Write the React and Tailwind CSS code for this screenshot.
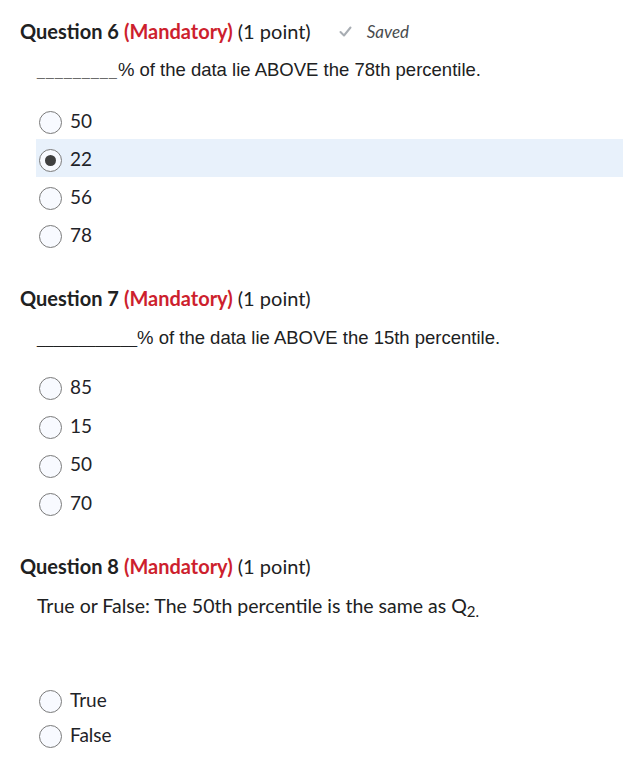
import { useState } from 'react'

const LATO = { fontFamily: 'Lato, "Noto Sans", sans-serif' }
const ARIAL = { fontFamily: '"Liberation Sans", Arial, sans-serif' }

function Radio({ checked }) {
  return (
    <span className="mt-[5px] flex h-[23px] w-[23px] shrink-0 items-center justify-center rounded-full border border-[#7a7a7a] bg-[#f8faff]">
      {checked && <span className="h-[11px] w-[11px] rounded-full bg-[#404040]" />}
    </span>
  )
}

function Options({ items, selected, onPick, rowH = 'h-[38px]' }) {
  return (
    <div className="flex flex-col">
      {items.map((label) => {
        const on = selected === label
        return (
          <button
            key={label}
            type="button"
            onClick={() => onPick(label)}
            className={`flex ${rowH} items-center gap-[8px] pl-[3px] text-left ${on ? 'bg-[#e8f1fb]' : ''}`}
          >
            <Radio checked={on} />
            <span className="text-[19px] leading-none text-[#1f2328]" style={LATO}>
              {label}
            </span>
          </button>
        )
      })}
    </div>
  )
}

function Title({ n, saved }) {
  return (
    <div className="flex h-[18px] items-center pl-[20px] text-[20px] leading-none text-[#202122]" style={LATO}>
      <span className="font-bold">Question {n}</span>
      <span className="ml-[5px] font-bold text-[#cd1f2e]">(Mandatory)</span>
      <span className="ml-[5px]">(1 point)</span>
      {saved && (
        <span className="ml-[28px] flex items-center gap-[15px] text-[17px] italic text-[#494c4e]">
          <svg width="13" height="11" viewBox="0 0 13 11" fill="none">
            <path d="M1.5 6 L5 9.5 L11.5 1.5" stroke="#a8adb3" strokeWidth="2" strokeLinecap="round" strokeLinejoin="round" />
          </svg>
          Saved
        </span>
      )}
    </div>
  )
}

export default function App() {
  const [q6, setQ6] = useState('22')
  const [q7, setQ7] = useState(null)
  const [q8, setQ8] = useState(null)

  return (
    <div className="min-h-[757px] w-[623px] bg-white">
      <section className="pt-[22px]">
        <Title n={6} saved />
        <p className="mt-[22px] h-[16px] pl-[37px] text-[18.5px] leading-[16px] text-[#202122]" style={ARIAL}>
          <span className="text-[14px] tracking-[1.2px] text-[#6b6b6b]">_________</span>% of the data lie ABOVE the 78th percentile.
        </p>
        <div className="mt-[23px] pl-[36px]">
          <Options items={['50', '22', '56', '78']} selected={q6} onPick={setQ6} />
        </div>
      </section>

      <section className="pt-[36px]">
        <Title n={7} />
        <p className="mt-[23px] h-[16px] pl-[37px] text-[18.5px] leading-[16px] text-[#202122]" style={ARIAL}>
          <span className="text-[15px]">____________</span>% of the data lie ABOVE the 15th percentile.
        </p>
        <div className="mt-[21px] pl-[36px]">
          <Options items={['85', '15', '50', '70']} selected={q7} onPick={setQ7} rowH="h-[38.7px]" />
        </div>
      </section>

      <section className="pt-[35px]">
        <Title n={8} />
        <p className="mt-[22px] h-[18px] pl-[37px] text-[19.5px] leading-[18px] text-[#202122]" style={LATO}>
          True or False: The 50th percentile is the same as Q<sub className="text-[15px] leading-none">2.</sub>
        </p>
        <div className="mt-[67px] pl-[36px]">
          <Options items={['True', 'False']} selected={q8} onPick={setQ8} rowH="h-[35px]" />
        </div>
      </section>
    </div>
  )
}
